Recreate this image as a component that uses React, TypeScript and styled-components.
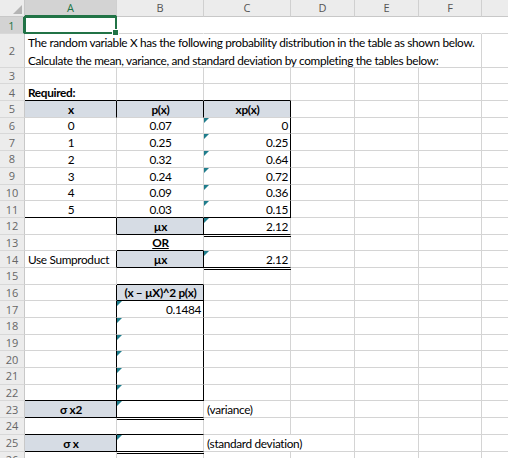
import React from 'react';
import styled, { createGlobalStyle, css } from 'styled-components';

const GlobalStyle = createGlobalStyle`
  html, body { margin: 0; padding: 0; background: #ffffff; overflow: hidden; }
  #root { width: 508px; height: 458px; overflow: hidden; }
`;

const GRID = '#d4d4d4';
const GREEN = '#217346';
const COLS = ['A', 'B', 'C', 'D', 'E', 'F', 'G'];

type Align = 'left' | 'center' | 'right';
type CellSpec = {
  text?: string;
  align?: Align;
  bold?: boolean;
  fill?: boolean;
  right?: 'black' | 'none';
  bottom?: 'black' | 'double';
  tri?: boolean;
  span?: number;
  underline?: boolean;
  wrap?: boolean;
  selected?: boolean;
};

const Sheet = styled.div`
  display: grid;
  grid-template-columns: 25px 92px 87px 87px 64px 64px 63px 64px;
  grid-template-rows: 17px 17px 33.7px repeat(24, 16.7px);
  width: 508px;
  height: 458px;
  overflow: hidden;
  font-family: Lato, 'Liberation Sans', sans-serif;
  background: #ffffff;
`;

const Corner = styled.div`
  background: #ececec;
  border-right: 1px solid #c8c8c8;
  border-bottom: 1px solid #c8c8c8;
  box-sizing: border-box;
  display: flex;
  align-items: flex-end;
  justify-content: flex-end;
  padding: 0 2px 2px 0;
`;

const ColHeader = styled.div<{ $selected?: boolean }>`
  box-sizing: border-box;
  background: ${(p) => (p.$selected ? '#d3d3d3' : '#ececec')};
  color: ${(p) => (p.$selected ? GREEN : '#555555')};
  border-right: 1px solid #d0d0d0;
  border-bottom: ${(p) => (p.$selected ? `2px solid ${GREEN}` : '1px solid #c8c8c8')};
  font-family: 'Open Sans', Lato, sans-serif;
  font-size: 11px;
  line-height: 16px;
  text-align: center;
  white-space: nowrap;
`;

const RowHeader = styled.div<{ $selected?: boolean }>`
  box-sizing: border-box;
  background: ${(p) => (p.$selected ? '#d3d3d3' : '#ececec')};
  color: ${(p) => (p.$selected ? GREEN : '#666666')};
  border-right: ${(p) => (p.$selected ? `2px solid ${GREEN}` : '1px solid #c8c8c8')};
  border-bottom: 1px solid #d8d8d8;
  font-family: 'Open Sans', Lato, sans-serif;
  font-size: 11px;
  display: flex;
  align-items: center;
  justify-content: center;
`;

const Cell = styled.div<{
  $align: Align;
  $bold?: boolean;
  $fill?: boolean;
  $right?: 'black' | 'none';
  $bottom?: 'black' | 'double';
  $span?: number;
  $wrap?: boolean;
  $underline?: boolean;
}>`
  position: relative;
  box-sizing: border-box;
  min-width: 0;
  grid-column: span ${(p) => p.$span ?? 1};
  display: flex;
  align-items: ${(p) => (p.$wrap ? 'flex-start' : 'flex-end')};
  justify-content: ${(p) =>
    p.$align === 'center' ? 'center' : p.$align === 'right' ? 'flex-end' : 'flex-start'};
  padding: 0 2px 0 3px;
  font-size: 11.8px;
  letter-spacing: -0.33px;
  line-height: ${(p) => (p.$wrap ? '17.6px' : '14px')};
  color: #000000;
  font-weight: ${(p) => (p.$bold ? 700 : 400)};
  text-decoration: ${(p) => (p.$underline ? 'underline' : 'none')};
  white-space: ${(p) => (p.$wrap ? 'normal' : 'nowrap')};
  background: ${(p) => (p.$fill ? '#d6dce4' : 'transparent')};
  border-right: 1px solid
    ${(p) => (p.$right === 'black' ? '#000000' : p.$right === 'none' ? 'transparent' : GRID)};
  border-bottom: 1px solid ${(p) => (p.$bottom ? '#000000' : GRID)};
  ${(p) =>
    p.$bottom === 'double' &&
    css`
      &::after {
        content: '';
        position: absolute;
        left: 0;
        right: -1px;
        bottom: -3px;
        height: 1px;
        background: #000000;
        z-index: 2;
      }
    `}
`;

const Triangle = styled.span`
  position: absolute;
  top: 0;
  left: 0;
  width: 0;
  height: 0;
  border-top: 5px solid #1f7d8c;
  border-right: 5px solid transparent;
`;

const Selection = styled.span`
  position: absolute;
  left: -1px;
  top: -1px;
  right: -1px;
  bottom: -1px;
  border: 2px solid ${GREEN};
  box-sizing: border-box;
  pointer-events: none;
  z-index: 3;
`;

const Handle = styled.span`
  position: absolute;
  right: -4px;
  bottom: -4px;
  width: 5px;
  height: 5px;
  background: ${GREEN};
  border: 1px solid #ffffff;
  z-index: 4;
`;

const Text = styled.span`
  display: block;
`;

const data: Record<number, Record<string, CellSpec>> = {
  1: {
    A: { selected: true, right: 'none' },
    B: { right: 'none' },
    C: { right: 'none' },
    D: { right: 'none' },
    E: { right: 'none' },
    F: { right: 'none' },
    G: { right: 'none' },
  },
  2: {
    A: {
      text:
        'The random variable X has the following probability distribution in the table as shown below. Calculate the mean, variance, and standard deviation by completing the tables below:',
      span: 6,
      wrap: true,
    },
  },
  4: {
    A: { text: 'Required:', bold: true, bottom: 'black' },
    B: { bottom: 'black' },
    C: { bottom: 'black' },
  },
  5: {
    A: { text: 'x', bold: true, fill: true, align: 'center', right: 'black' },
    B: { text: 'p(x)', bold: true, fill: true, align: 'center', right: 'black' },
    C: { text: 'xp(x)', bold: true, fill: true, align: 'center', right: 'black' },
  },
  12: {
    A: { right: 'black' },
    B: { text: 'µx', bold: true, fill: true, align: 'center', right: 'black', bottom: 'black' },
    C: { text: '2.12', align: 'right', tri: true, bottom: 'double' },
  },
  13: {
    B: { text: 'OR', bold: true, underline: true, align: 'center', bottom: 'black' },
  },
  14: {
    A: { text: 'Use Sumproduct', right: 'black' },
    B: { text: 'µx', bold: true, fill: true, align: 'center', right: 'black', bottom: 'black' },
    C: { text: '2.12', align: 'right', tri: true, bottom: 'double' },
  },
  15: {
    B: { bottom: 'black' },
  },
  16: {
    A: { right: 'black' },
    B: {
      text: '(x – µX)^2 p(x)',
      bold: true,
      fill: true,
      align: 'center',
      right: 'black',
      bottom: 'black',
    },
  },
  23: {
    A: { text: 'σ x2', bold: true, fill: true, align: 'center', right: 'black', bottom: 'black' },
    B: { tri: true, bottom: 'double' },
    C: { text: '(variance)' },
  },
  24: {
    A: { bottom: 'black' },
    B: { bottom: 'black' },
  },
  25: {
    A: { text: 'σ x', bold: true, fill: true, align: 'center', right: 'black', bottom: 'black' },
    B: { tri: true, bottom: 'double' },
    C: { text: '(standard deviation)', span: 2 },
  },
};

const dist = [
  ['0', '0.07', '0'],
  ['1', '0.25', '0.25'],
  ['2', '0.32', '0.64'],
  ['3', '0.24', '0.72'],
  ['4', '0.09', '0.36'],
  ['5', '0.03', '0.15'],
];
dist.forEach(([x, p, xp], i) => {
  const r = 6 + i;
  const last = i === dist.length - 1;
  data[r] = {
    A: { text: x, align: 'center', bottom: last ? 'black' : undefined },
    B: { text: p, align: 'center', bottom: last ? 'black' : undefined },
    C: { text: xp, align: 'right', tri: true, right: 'black', bottom: last ? 'black' : undefined },
  };
});
for (let r = 17; r <= 22; r++) {
  data[r] = {
    A: { right: 'black', bottom: r === 22 ? 'black' : undefined },
    B: {
      text: r === 17 ? '0.1484' : undefined,
      align: 'right',
      tri: true,
      right: 'black',
      bottom: r === 22 ? 'black' : undefined,
    },
  };
}

const CornerMark = () => (
  <svg width="9" height="9" viewBox="0 0 9 9">
    <polygon points="9,0 9,9 0,9" fill="#b4b4b4" />
  </svg>
);

export default function App() {
  const rows: React.ReactNode[] = [];
  for (let r = 1; r <= 26; r++) {
    rows.push(
      <RowHeader key={`h${r}`} $selected={r === 1}>
        {r}
      </RowHeader>
    );
    let skip = 0;
    COLS.forEach((c) => {
      if (skip > 0) {
        skip--;
        return;
      }
      const spec = data[r]?.[c] ?? {};
      if (spec.span) skip = spec.span - 1;
      rows.push(
        <Cell
          key={`${c}${r}`}
          $align={spec.align ?? 'left'}
          $bold={spec.bold}
          $fill={spec.fill}
          $right={spec.right}
          $bottom={spec.bottom}
          $span={spec.span}
          $wrap={spec.wrap}
          $underline={spec.underline}
        >
          {spec.tri && <Triangle />}
          {spec.text && <Text>{spec.text}</Text>}
          {spec.selected && (
            <Selection>
              <Handle />
            </Selection>
          )}
        </Cell>
      );
    });
  }

  return (
    <>
      <GlobalStyle />
      <Sheet>
        <Corner>
          <CornerMark />
        </Corner>
        {COLS.map((c) => (
          <ColHeader key={c} $selected={c === 'A'}>
            {c}
          </ColHeader>
        ))}
        {rows}
      </Sheet>
    </>
  );
}
